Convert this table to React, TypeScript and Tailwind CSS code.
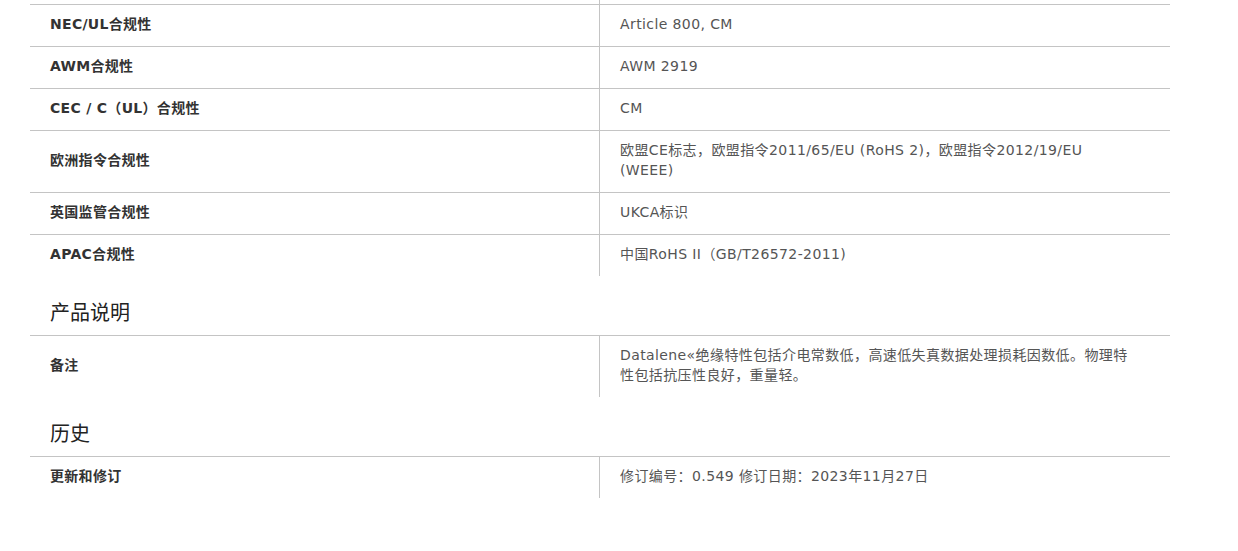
const font = { fontFamily: '"DejaVu Sans", "Noto Sans CJK SC", sans-serif' };

type Row = { label: string; value: string };

const compliance: Row[] = [
  { label: 'NEC/UL合规性', value: 'Article 800, CM' },
  { label: 'AWM合规性', value: 'AWM 2919' },
  { label: 'CEC / C（UL）合规性', value: 'CM' },
  {
    label: '欧洲指令合规性',
    value: '欧盟CE标志，欧盟指令2011/65/EU (RoHS 2)，欧盟指令2012/19/EU (WEEE)',
  },
  { label: '英国监管合规性', value: 'UKCA标识' },
  { label: 'APAC合规性', value: '中国RoHS II（GB/T26572-2011)' },
];

const description: Row[] = [
  {
    label: '备注',
    value:
      'Datalene«绝缘特性包括介电常数低，高速低失真数据处理损耗因数低。物理特性包括抗压性良好，重量轻。',
  },
];

const history: Row[] = [
  { label: '更新和修订', value: '修订编号：0.549 修订日期：2023年11月27日' },
];

const SpecRow = ({ row }: { row: Row }) => (
  <div className="grid grid-cols-[569px_1fr] border-t border-[#c4c4c4]">
    <div className="flex items-center px-5 pt-[9px] pb-[12px] text-[14px] leading-[20px] font-bold tracking-[0.3px] text-[#333]">
      {row.label}
    </div>
    <div className="flex items-center border-l border-[#c4c4c4] pl-5 pr-[34px] pt-[9px] pb-[12px] text-[14px] leading-[20px] tracking-[0.4px] text-[#555]">
      {row.value}
    </div>
  </div>
);

const Section = ({ title, rows }: { title?: string; rows: Row[] }) => (
  <div>
    {title && (
      <h2 className="px-5 pt-[23px] pb-[8px] text-[20px] leading-[28px] font-normal text-[#222]">
        {title}
      </h2>
    )}
    {rows.map((r) => (
      <SpecRow key={r.label} row={r} />
    ))}
  </div>
);

export default function App() {
  return (
    <div className="min-h-screen bg-white" style={font}>
      <div className="ml-[30px] w-[1140px]">
        {/* tail of the previous row */}
        <div className="grid h-[4px] grid-cols-[569px_1fr]">
          <div />
          <div className="border-l border-[#c4c4c4]" />
        </div>
        <Section rows={compliance} />
        <Section title="产品说明" rows={description} />
        <Section title="历史" rows={history} />
      </div>
    </div>
  );
}
